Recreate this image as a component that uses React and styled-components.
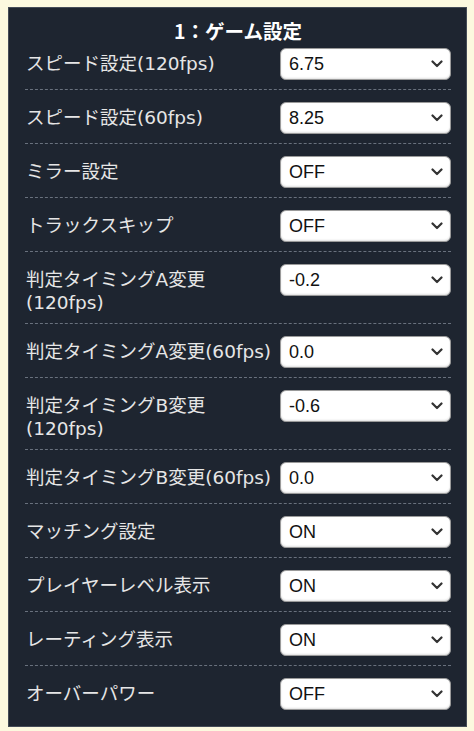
import React from "react";
import styled, { createGlobalStyle } from "styled-components";

const settings = [
  { label: ["スピード設定(120fps)"], value: "6.75", options: ["6.50", "6.75", "7.00"] },
  { label: ["スピード設定(60fps)"], value: "8.25", options: ["8.00", "8.25", "8.50"] },
  { label: ["ミラー設定"], value: "OFF", options: ["ON", "OFF"] },
  { label: ["トラックスキップ"], value: "OFF", options: ["ON", "OFF"] },
  { label: ["判定タイミングA変更", "(120fps)"], value: "-0.2", options: ["-0.2", "0.0", "0.2"] },
  { label: ["判定タイミングA変更(60fps)"], value: "0.0", options: ["-0.2", "0.0", "0.2"] },
  { label: ["判定タイミングB変更", "(120fps)"], value: "-0.6", options: ["-0.6", "0.0", "0.6"] },
  { label: ["判定タイミングB変更(60fps)"], value: "0.0", options: ["-0.6", "0.0", "0.6"] },
  { label: ["マッチング設定"], value: "ON", options: ["ON", "OFF"] },
  { label: ["プレイヤーレベル表示"], value: "ON", options: ["ON", "OFF"] },
  { label: ["レーティング表示"], value: "ON", options: ["ON", "OFF"] },
  { label: ["オーバーパワー"], value: "OFF", options: ["ON", "OFF"] },
];

const GlobalStyle = createGlobalStyle`
  html, body {
    margin: 0;
    padding: 0;
    background: #fcf9df;
  }
  body {
    font-family: "DejaVu Sans", "Noto Sans CJK JP", sans-serif;
  }
`;

const Page = styled.div`
  padding: 7px 7px 6px 8px;
`;

const Panel = styled.section`
  background: #1e2530;
  border: 1px solid #454c57;
  padding: 11px 15px 7px 16px;
  color: #e9e9e9;
`;

const Title = styled.h2`
  margin: 0;
  font-family: "Noto Sans CJK JP", sans-serif;
  font-size: 19.5px;
  line-height: 24px;
  font-weight: 700;
  color: #ffffff;
  text-align: center;
`;

const Row = styled.div`
  display: flex;
  align-items: flex-start;
  gap: 2px;
  padding: 12px 0 9px;
  border-top: 1px dashed #69717d;

  &:first-of-type {
    padding-top: 5px;
    border-top: none;
  }
`;

const Label = styled.div`
  flex: 1;
  padding: 4px 0 0 1px;
  font-family: "DejaVu Sans", "Noto Sans CJK JP", sans-serif;
  font-size: 18.5px;
  line-height: 23px;
  white-space: nowrap;
  color: #e6e6e6;
`;

const SelectWrap = styled.div`
  position: relative;
  width: 171px;
  height: 32px;
  flex-shrink: 0;
`;

const Select = styled.select`
  appearance: none;
  -webkit-appearance: none;
  width: 100%;
  height: 100%;
  margin: 0;
  padding: 0 28px 0 8px;
  border: 1px solid #9a9a9a;
  border-radius: 6px;
  background: #ffffff;
  box-shadow: inset 0 -1px 2px rgba(0, 0, 0, 0.12);
  font-family: "Liberation Sans", Arial, sans-serif;
  font-size: 18px;
  color: #111111;
  outline: none;
`;

const Chevron = styled.svg`
  position: absolute;
  right: 8px;
  top: 50%;
  width: 12px;
  height: 8px;
  margin-top: -4px;
  pointer-events: none;
`;

const SettingRow = ({ label, value, options }) => (
  <Row>
    <Label>
      {label.map((line, i) => (
        <div key={i}>{line}</div>
      ))}
    </Label>
    <SelectWrap>
      <Select defaultValue={value}>
        {options.map((o) => (
          <option key={o} value={o}>
            {o}
          </option>
        ))}
      </Select>
      <Chevron viewBox="0 0 12 8">
        <path
          d="M1.5 1.5 L6 6 L10.5 1.5"
          fill="none"
          stroke="#333"
          strokeWidth="2.2"
          strokeLinecap="round"
          strokeLinejoin="round"
        />
      </Chevron>
    </SelectWrap>
  </Row>
);

const App = () => {
  return (
    <>
      <GlobalStyle />
      <Page>
        <Panel>
          <Title>1：ゲーム設定</Title>
          <div>
            {settings.map((s) => (
              <SettingRow key={s.label.join("")} {...s} />
            ))}
          </div>
        </Panel>
      </Page>
    </>
  );
};

export default App;
